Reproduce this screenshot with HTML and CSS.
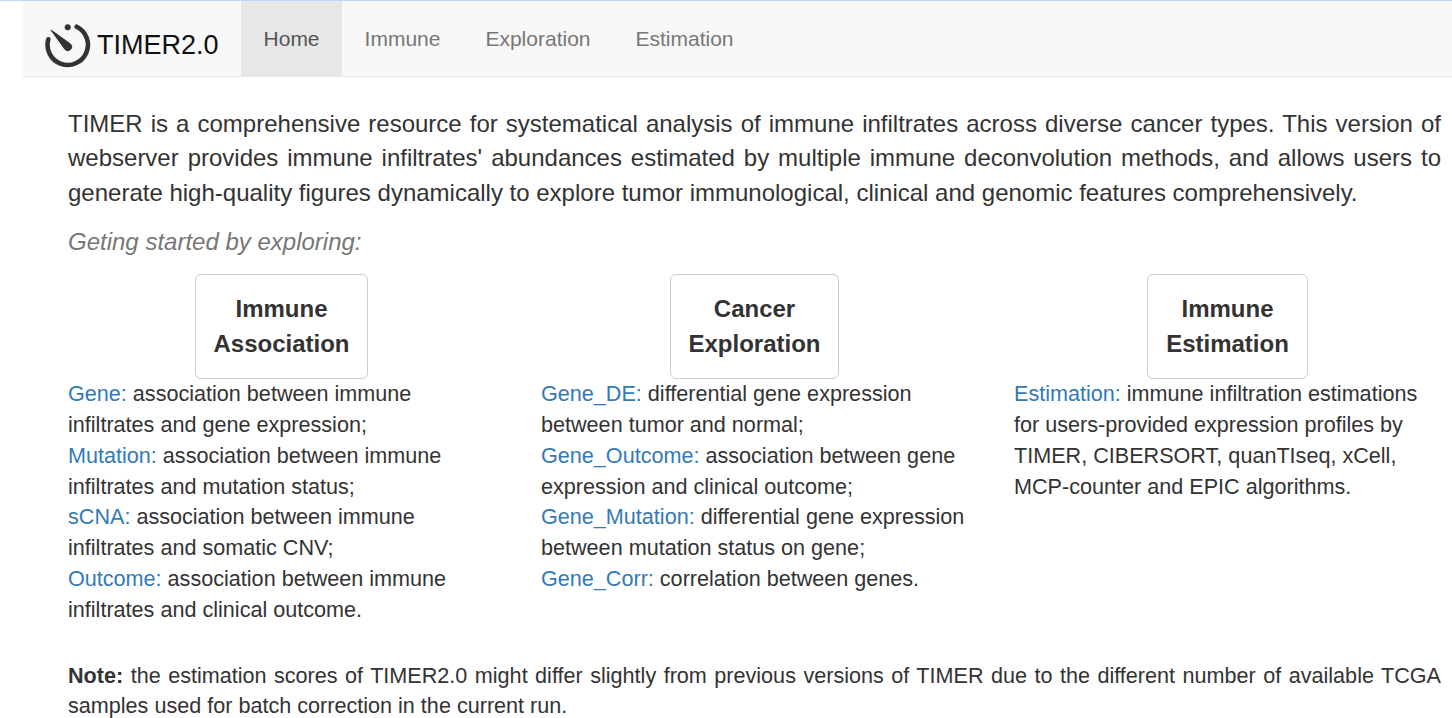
FILE: index.html
```html
<!DOCTYPE html>
<html lang="en">
  <head>
    <meta charset="UTF-8" />
    <title>TIMER2.0</title>
    <link rel="stylesheet" href="styles.css">
  </head>
  <body>
    <nav class="navbar">
      <a href="#" class="brand">
        <svg class="brand-icon" viewBox="0 0 46 46" width="46" height="46" aria-hidden="true">
          <path d="M31.7 2.7A20.2 20.2 0 1 1 3.3 15.3" fill="none" stroke="#333" stroke-width="4.6" stroke-linecap="round" />
          <circle cx="22.7" cy="3.3" r="3" fill="#333" />
          <path d="M6 6L25.5 20A3.8 3.8 0 0 1 20 25.5Z" fill="#333" stroke="#333" stroke-linejoin="round" />
        </svg>
        <span>TIMER2.0</span>
      </a>
      <ul class="nav-links">
        <li class="active"><a href="#">Home</a></li>
        <li><a href="#">Immune</a></li>
        <li><a href="#">Exploration</a></li>
        <li><a href="#">Estimation</a></li>
      </ul>
    </nav>

    <div class="container">
      <p class="intro">
        TIMER is a comprehensive resource for systematical analysis of immune infiltrates across diverse cancer types. This version of webserver provides immune infiltrates' abundances estimated by multiple immune deconvolution methods, and allows users to generate high-quality figures dynamically to explore tumor immunological, clinical and genomic features comprehensively.
      </p>
      <p class="started">Geting started by exploring:</p>

      <div class="columns">
        <div class="column">
          <div class="btn-wrap"><a href="#" class="big-btn">Immune<br />Association</a></div>
          <p><a href="#">Gene:</a> association between immune infiltrates and gene expression;<br />
          <a href="#">Mutation:</a> association between immune infiltrates and mutation status;<br />
          <a href="#">sCNA:</a> association between immune infiltrates and somatic CNV;<br />
          <a href="#">Outcome:</a> association between immune infiltrates and clinical outcome.</p>
        </div>
        <div class="column">
          <div class="btn-wrap"><a href="#" class="big-btn">Cancer<br />Exploration</a></div>
          <p><a href="#">Gene_DE:</a> differential gene expression between tumor and normal;<br />
          <a href="#">Gene_Outcome:</a> association between gene expression and clinical outcome;<br />
          <a href="#">Gene_Mutation:</a> differential gene expression between mutation status on gene;<br />
          <a href="#">Gene_Corr:</a> correlation between genes.</p>
        </div>
        <div class="column">
          <div class="btn-wrap"><a href="#" class="big-btn">Immune<br />Estimation</a></div>
          <p><a href="#">Estimation:</a> immune infiltration estimations for users-provided expression profiles by TIMER, CIBERSORT, quanTIseq, xCell, MCP-counter and EPIC algorithms.</p>
        </div>
      </div>

      <p class="note">
        <strong>Note:</strong> the estimation scores of TIMER2.0 might differ slightly from previous versions of TIMER due to the different number of available TCGA samples used for batch correction in the current run.
      </p>
    </div>
  </body>
</html>
```

FILE: styles.css
```css
html,
body {
  height: 718px;
  overflow: hidden;
}

body {
  font-family: "Liberation Sans", Arial, sans-serif;
  color: #333;
  background-color: #fff;
  margin: 0;
  padding: 0;
  border-top: 1px solid #b9d9fb;
}

a {
  color: #337ab7;
  text-decoration: none;
}

p {
  margin: 0;
}

.navbar {
  display: flex;
  height: 75px;
  margin-left: 23px;
  background-color: #f8f8f8;
  border-bottom: 1px solid #e7e7e7;
}

.brand {
  display: flex;
  align-items: center;
  gap: 6px;
  padding: 0 22.5px 0 22px;
  font-size: 27px;
  color: #111;
}

.brand-icon {
  margin-top: 17px;
}

.brand span {
  margin-top: 13px;
}

.nav-links {
  display: flex;
  list-style: none;
  margin: 0;
  padding: 0;
}

.nav-links a {
  display: block;
  height: 75px;
  padding: 23px 22.5px 0;
  box-sizing: border-box;
  font-size: 21px;
  line-height: 30px;
  color: #777;
}

.nav-links .active a {
  color: #555;
  background-color: #e7e7e7;
}

.container {
  width: 1373px;
  margin-left: 68px;
  padding-top: 29.6px;
}

.intro {
  font-size: 24px;
  line-height: 34.6px;
  text-align: justify;
}

.started {
  margin-top: 14.9px;
  font-size: 24px;
  line-height: 34px;
  font-style: italic;
  color: #777;
}

.columns {
  display: grid;
  grid-template-columns: repeat(3, 427px);
  gap: 46px;
  margin-top: 15px;
}

.column p {
  font-size: 21.6px;
  line-height: 30.8px;
}

.btn-wrap {
  text-align: center;
}

.big-btn {
  display: inline-block;
  padding: 16px 17.9px 17px;
  font-size: 24px;
  line-height: 35px;
  font-weight: bold;
  color: #333;
  background-color: #fff;
  border: 1px solid #ccc;
  border-radius: 6px;
}

.note {
  margin-top: 35px;
  font-size: 21.6px;
  line-height: 30.8px;
  text-align: justify;
}
```
